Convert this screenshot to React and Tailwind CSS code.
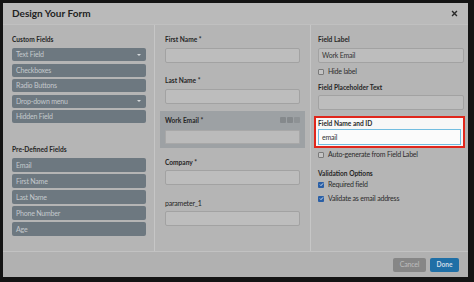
const customFields = [
  { name: 'Text Field', arrow: true },
  { name: 'Checkboxes' },
  { name: 'Radio Buttons' },
  { name: 'Drop-down menu', arrow: true },
  { name: 'Hidden Field' },
];

const predefined = ['Email', 'First Name', 'Last Name', 'Phone Number', 'Age'];

const txt = 'text-[7px] tracking-[-0.2px]';
const label = 'h-[8px] text-[6.6px] font-bold leading-[8px] text-[#262626]';

function FieldButton({ name, arrow, h }) {
  return (
    <div className={`${h} flex items-center justify-between rounded-[2px] bg-[#6d7880] px-[4px] ${txt} text-[#c4c9cd]`}>
      <span>{name}</span>
      {arrow && (
        <span className="mr-[1px] h-0 w-0 border-x-[2.5px] border-t-[2.5px] border-x-transparent border-t-[#d5d9dc]" />
      )}
    </div>
  );
}

function Input({ className = '', children }) {
  return (
    <div className={`flex items-center rounded-[2px] border border-[#a2a2a2] bg-[#bdbdbd] px-[3px] ${txt} text-[#333] ${className}`}>
      {children}
    </div>
  );
}

function Checkbox({ checked, label }) {
  return (
    <div className={`flex h-[9px] items-center gap-[4px] ${txt} text-[#2c2c2c]`}>
      {checked ? (
        <span className="flex h-[6px] w-[6px] items-center justify-center rounded-[1px] bg-[#2a5fa6]">
          <svg width="5" height="5" viewBox="0 0 10 10">
            <path d="M2 5.2l2 2 4-4.4" fill="none" stroke="#e6ecf2" strokeWidth="1.8" />
          </svg>
        </span>
      ) : (
        <span className="h-[6px] w-[6px] rounded-[1px] border border-[#7a7a7a] bg-[#c4c4c4]" />
      )}
      <span>{label}</span>
    </div>
  );
}

export default function App() {
  return (
    <div
      className="h-[282px] w-[474px] bg-[#141414] pb-[5px] pl-[3px] pr-[6px] pt-[3px]"
      style={{ fontFamily: 'Lato, "Noto Sans", sans-serif' }}
    >
      <div className="flex h-full flex-col bg-[#b5b5b5]">
        {/* header */}
        <div className="flex h-[22px] items-center justify-between border-b border-[#c0c0c0] bg-[#bababa] pl-[9px] pr-[10px]">
          <span className="text-[10px] font-bold text-[#222]">Design Your Form</span>
          <svg width="7" height="7" viewBox="0 0 10 10">
            <path d="M1.5 1.5l7 7M8.5 1.5l-7 7" stroke="#2a2a2a" strokeWidth="2" />
          </svg>
        </div>

        {/* body */}
        <div className="flex h-[227px] border-b border-[#c2c2c2]">
          {/* left column */}
          <div className="w-[152px] border-r border-[#c6c6c6] pl-[9px] pr-[8px] pt-[10px]">
            <div className={`mb-[5px] ${label}`}>Custom Fields</div>
            <div className="flex flex-col gap-[2.5px]">
              {customFields.map((f) => (
                <FieldButton key={f.name} name={f.name} arrow={f.arrow} h="h-[13px]" />
              ))}
            </div>
            <div className={`mb-[5px] mt-[22px] ${label}`}>Pre-Defined Fields</div>
            <div className="flex flex-col gap-[2px]">
              {predefined.map((f) => (
                <FieldButton key={f} name={f} h="h-[14px]" />
              ))}
            </div>
          </div>

          {/* middle column */}
          <div className="w-[156px] border-r border-[#c6c6c6] pt-[10px]">
            <div className="px-[10px]">
              <div className={label}>First Name *</div>
              <Input className="mt-[5px] h-[15px]" />
              <div className={`mt-[13px] ${label}`}>Last Name *</div>
              <Input className="mt-[5px] h-[15px]" />
            </div>
            <div className="mx-[5px] mt-[7px] h-[37px] bg-[#9da1a4] px-[5px] pt-[5px]">
              <div className="flex h-[8px] items-center justify-between">
                <span className="text-[6.6px] font-bold leading-[8px] text-[#262626]">Work Email *</span>
                <span className="flex gap-[1px]">
                  <span className="h-[6px] w-[6px] rounded-[1px] bg-[#85898c]" />
                  <span className="h-[6px] w-[6px] rounded-[1px] bg-[#85898c]" />
                  <span className="h-[6px] w-[6px] rounded-[1px] bg-[#8e9295]" />
                </span>
              </div>
              <div className="mt-[6px] h-[14px] rounded-[1px] border border-[#a8a8a8] bg-[#bbbbbb]" />
            </div>
            <div className="px-[10px]">
              <div className={`mt-[10px] ${label}`}>Company *</div>
              <Input className="mt-[4px] h-[15px]" />
              <div className={`mt-[14px] h-[8px] leading-[8px] text-[#262626] ${txt}`}>parameter_1</div>
              <Input className="mt-[4px] h-[15px]" />
            </div>
          </div>

          {/* right column */}
          <div className="flex-1 pt-[10px]">
            <div className="pl-[7px] pr-[4px]">
              <div className={label}>Field Label</div>
              <Input className="mt-[5px] h-[15px]">Work Email</Input>
              <div className="mt-[4px]">
                <Checkbox label="Hide label" />
              </div>
              <div className={`mt-[7px] ${label}`}>Field Placeholder Text</div>
              <Input className="mt-[4px] h-[15px]" />
            </div>
            <div className="mx-[3px] mt-[6px] h-[32px] border-2 border-[#e0261b] bg-[#f7f7f7] px-[2px] pt-[1px]">
              <div className="h-[8px] text-[6.6px] font-bold leading-[8px] text-[#2a2a2a]">Field Name and ID</div>
              <div className={`mt-[2px] flex h-[16px] items-center border border-[#72bde0] bg-[#fbfbfb] px-[3px] ${txt} text-[#333]`}>email</div>
            </div>
            <div className="pl-[7px]">
              <div className="mt-[2px]">
                <Checkbox label="Auto-generate from Field Label" />
              </div>
              <div className={`mt-[10px] ${label}`}>Validation Options</div>
              <div className="mt-[3px] flex flex-col gap-[5px]">
                <Checkbox checked label="Required field" />
                <Checkbox checked label="Validate as email address" />
              </div>
            </div>
          </div>
        </div>

        {/* footer */}
        <div className="flex flex-1 items-center justify-end gap-[4px] bg-[#b1b1b1] pr-[9px]">
          <div className={`flex h-[14px] w-[33px] items-center justify-center rounded-[2px] bg-[#868686] ${txt} text-[#bdbdbd]`}>Cancel</div>
          <div className="flex h-[14px] w-[29px] items-center justify-center rounded-[2px] bg-[#1f6fa6] text-[6.6px] font-bold text-[#cfdce7]">Done</div>
        </div>
      </div>
    </div>
  );
}
